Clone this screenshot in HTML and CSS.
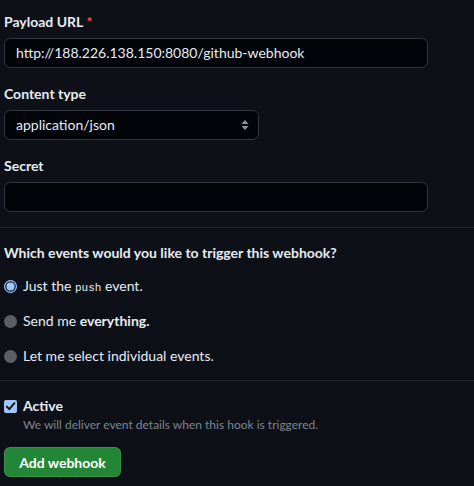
FILE: index.html
```html
<!DOCTYPE html>
<html lang="en">
<head>
<meta charset="utf-8">
<title>Add webhook</title>
<link rel="stylesheet" href="styles.css">
</head>
<body>
<form class="form">
  <div class="group">
    <label class="label">Payload URL <span class="req">*</span></label>
    <div class="input wide">http://188.226.138.150:8080/github-webhook</div>
  </div>
  <div class="group">
    <label class="label">Content type</label>
    <div class="input select">
      <span>application/json</span>
      <svg class="caret" width="8" height="12" viewBox="0 0 8 12"><path d="M4 1 L7.5 5 H0.5 Z M4 11 L0.5 7 H7.5 Z" fill="#8b949e"/></svg>
    </div>
  </div>
  <div class="group last">
    <label class="label">Secret</label>
    <div class="input wide"></div>
  </div>
  <hr class="rule">
  <h3 class="heading">Which events would you like to trigger this webhook?</h3>
  <div class="options">
    <div class="option"><span class="radio checked"></span><span>Just the <code>push</code> event.</span></div>
    <div class="option"><span class="radio"></span><span>Send me <strong>everything.</strong></span></div>
    <div class="option"><span class="radio"></span><span>Let me select individual events.</span></div>
  </div>
  <hr class="rule second">
  <div class="active">
    <div class="check-row">
      <span class="checkbox"><svg width="11" height="11" viewBox="0 0 11 11"><path d="M1.8 5.6 L4.3 8.2 L9.4 2.2" fill="none" stroke="#0d1117" stroke-width="1.9" stroke-linecap="round" stroke-linejoin="round"/></svg></span>
      <span class="active-label">Active</span>
    </div>
    <p class="note">We will deliver event details when this hook is triggered.</p>
  </div>
  <button type="button" class="btn">Add webhook</button>
</form>
</body>
</html>
```
FILE: styles.css
```css
* { box-sizing: border-box; }
html, body {
  margin: 0;
  padding: 0;
  background: #0d1117;
}
body {
  font-family: Lato, "Noto Sans", sans-serif;
  font-size: 14px;
  color: #e6edf3;
  width: 474px;
  height: 486px;
  overflow: hidden;
}
.form {
  padding-top: 12px;
}
.group {
  padding-left: 4px;
  display: flex;
  flex-direction: column;
  margin-bottom: 16px;
}
.group.last { margin-bottom: 15px; }
.label {
  font-weight: 700;
  line-height: 20px;
  height: 20px;
  margin-bottom: 6px;
}
.req { color: #f85149; }
.input {
  height: 30px;
  border: 1px solid #30363d;
  border-radius: 6px;
  background: #010409;
  padding: 0 11px;
  display: flex;
  align-items: center;
  line-height: 20px;
  color: #e6edf3;
}
.wide { width: 424px; }
.select {
  width: 255px;
  justify-content: space-between;
  padding-right: 9px;
}
.caret { display: block; }
.rule {
  border: 0;
  border-top: 1px solid #21262d;
  margin: 0;
  height: 0;
}
.heading {
  margin: 15px 0 13px 4px;
  font-size: 14px;
  font-weight: 700;
  line-height: 20px;
  height: 20px;
}
.options {
  display: flex;
  flex-direction: column;
  gap: 15px;
  padding-left: 4px;
}
.option {
  display: flex;
  align-items: center;
  gap: 6px;
  line-height: 20px;
  height: 20px;
}
.option strong { font-weight: 700; }
code {
  font-family: "Liberation Mono", "DejaVu Sans Mono", monospace;
  font-size: 11px;
  line-height: 1;
}
.radio {
  width: 13px;
  height: 13px;
  border-radius: 50%;
  background: #5b5f66;
  flex: none;
}
.radio.checked {
  background: #9fc6f8;
  border: 1px solid #9fc6f8;
  box-shadow: inset 0 0 0 1.5px #1f2d44;
}
.rule.second { margin-top: 14px; }
.active {
  padding-left: 4px;
  margin-top: 15px;
}
.check-row {
  display: flex;
  align-items: center;
  gap: 6px;
  line-height: 20px;
  height: 20px;
}
.checkbox {
  width: 13px;
  height: 13px;
  border-radius: 2px;
  background: #9fc6f8;
  display: flex;
  align-items: center;
  justify-content: center;
  flex: none;
}
.checkbox svg { display: block; }
.active-label { font-weight: 700; }
.note {
  margin: 0 0 0 19px;
  font-size: 12px;
  line-height: 18px;
  height: 18px;
  color: #7d8590;
}
.btn {
  margin: 13px 0 0 4px;
  height: 30px;
  width: 117px;
  white-space: nowrap;
  border: 1px solid rgba(240, 246, 252, 0.1);
  border-radius: 6px;
  background: #238636;
  color: #ffffff;
  font-family: inherit;
  font-size: 14px;
  font-weight: 700;
  padding: 0;
  cursor: pointer;
}
```
